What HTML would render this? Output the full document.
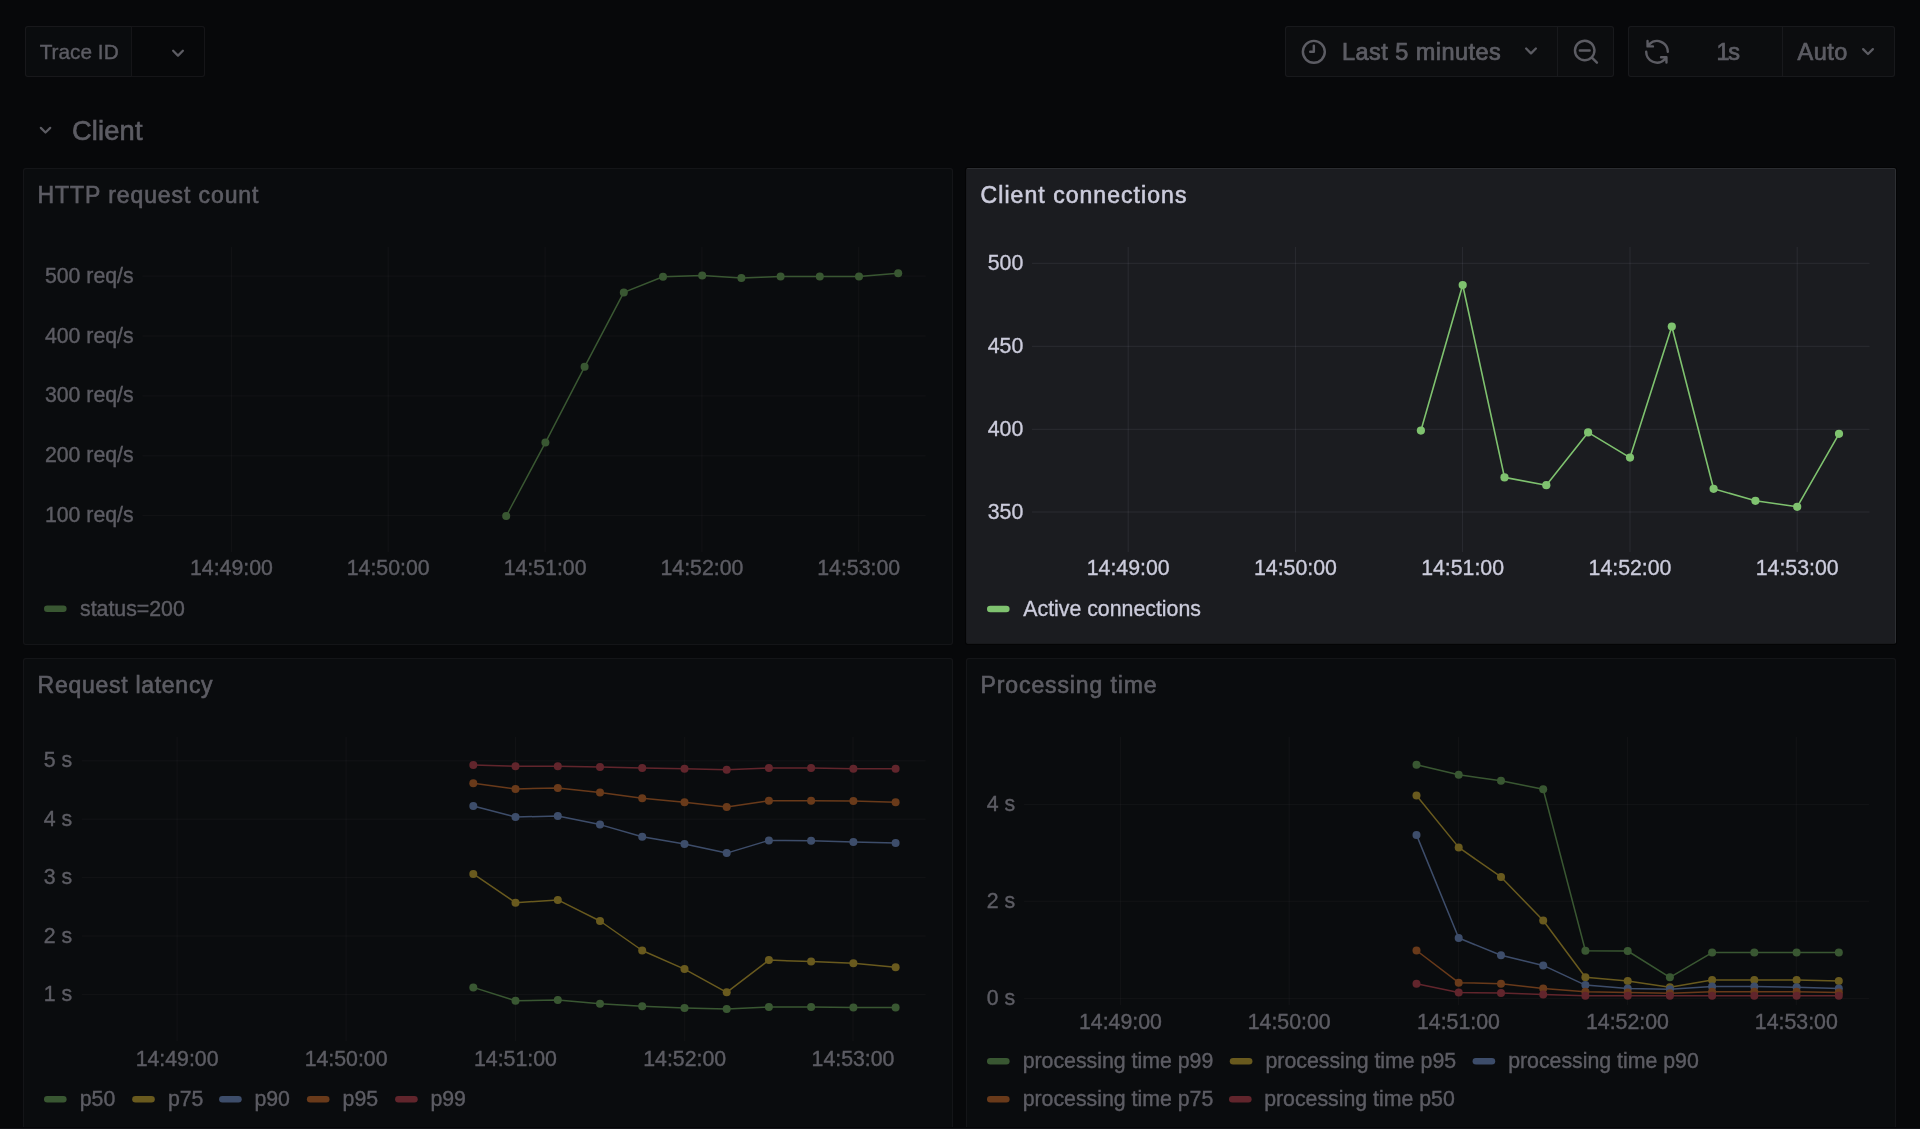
<!DOCTYPE html>
<html><head><meta charset="utf-8"><style>
html,body{margin:0;padding:0}
body{width:1920px;height:1129px;overflow:hidden;position:relative;background:#111217;font-family:"Liberation Sans", sans-serif}
.panel{position:absolute;box-sizing:border-box;background:#181b1f;border:1px solid rgba(204,204,220,0.12);border-radius:3px}
.box{position:absolute;box-sizing:border-box;border:1px solid rgba(204,204,220,0.16)}
svg.ps{position:absolute;overflow:visible;font-family:"Liberation Sans", sans-serif}
.ttl{stroke:#ccccdc;stroke-width:0.6px}
.med{stroke:#ccccdc;stroke-width:0.7px}
.lbl{stroke:#ccccdc;stroke-width:0.35px}
svg.ps{will-change:transform}
#dim{position:absolute;left:0;top:0;width:1920px;height:1129px;background:rgba(0,0,0,0.55)}
#focus{position:absolute;left:0;top:0;width:1920px;height:1129px}
</style></head><body>

<div class="box" style="left:25px;top:26px;width:107px;height:51px;background:#181b1f;border-radius:3px 0 0 3px"></div>
<div class="box" style="left:131px;top:26px;width:74px;height:51px;background:#111217;border-radius:0 3px 3px 0"></div>
<div class="box" style="left:1285px;top:26px;width:273px;height:51px;background:#1b1d22;border-radius:3px 0 0 3px"></div>
<div class="box" style="left:1557px;top:26px;width:57px;height:51px;background:#1b1d22;border-radius:0 3px 3px 0"></div>
<div class="box" style="left:1628px;top:26px;width:155px;height:51px;background:#1b1d22;border-radius:3px 0 0 3px"></div>
<div class="box" style="left:1782px;top:26px;width:113px;height:51px;background:#1b1d22;border-radius:0 3px 3px 0"></div>
<svg class="ps" style="left:0;top:0" width="1920" height="160" viewBox="0 0 1920 160">
  <text x="39.7" y="58.8" font-size="20.8" text-anchor="start" fill="#ccccdc" class="lbl">Trace ID</text>
  <path transform="translate(164.3,39.5) scale(1.14)" fill="#ccccdc" d="M17,9.17a1,1,0,0,0-1.41,0L12,12.71,8.46,9.17a1,1,0,0,0-1.41,0,1,1,0,0,0,0,1.42l4.24,4.24a1,1,0,0,0,1.42,0L17,10.59A1,1,0,0,0,17,9.17Z"/>
  <path transform="translate(1299.2,37.2) scale(1.22)" fill="#ccccdc" d="M12,2A10,10,0,1,0,22,12,10.01114,10.01114,0,0,0,12,2Zm0,18a8,8,0,1,1,8-8A8.00917,8.00917,0,0,1,12,20ZM12,6a.99974.99974,0,0,0-1,1v4H9a1,1,0,0,0,0,2h3a.99974.99974,0,0,0,1-1V7A.99974.99974,0,0,0,12,6Z"/>
  <text x="1342" y="59.8" font-size="23.5" text-anchor="start" fill="#ccccdc" class="med" letter-spacing="0.45">Last 5 minutes</text>
  <path transform="translate(1517.3,37.3) scale(1.14)" fill="#ccccdc" d="M17,9.17a1,1,0,0,0-1.41,0L12,12.71,8.46,9.17a1,1,0,0,0-1.41,0,1,1,0,0,0,0,1.42l4.24,4.24a1,1,0,0,0,1.42,0L17,10.59A1,1,0,0,0,17,9.17Z"/>
  <path transform="translate(1571.3,37.1) scale(1.22)" fill="#ccccdc" d="M21.71,20.29,18,16.61A9,9,0,1,0,16.61,18l3.68,3.68a1,1,0,0,0,1.42,0A1,1,0,0,0,21.71,20.29ZM11,18a7,7,0,1,1,7-7A7,7,0,0,1,11,18Zm4-8H7a1,1,0,0,0,0,2h8a1,1,0,0,0,0-2Z"/>
  <path transform="translate(1642.6,37.4) scale(1.2)" fill="#ccccdc" d="M19.91,15.51H15.38a1,1,0,0,0,0,2h2.4A8,8,0,0,1,4,12a1,1,0,0,0-2,0,10,10,0,0,0,16.88,7.23V21a1,1,0,0,0,2,0V16.5A1,1,0,0,0,19.91,15.51ZM12,2A10,10,0,0,0,5.12,4.77V3a1,1,0,0,0-2,0V7.5a1,1,0,0,0,1,1h4.5a1,1,0,0,0,0-2H6.22A8,8,0,0,1,20,12a1,1,0,0,0,2,0A10,10,0,0,0,12,2Z"/>
  <text x="1716.5" y="60" font-size="23.5" text-anchor="start" fill="#ccccdc" class="med" letter-spacing="-1.2">1s</text>
  <text x="1797.5" y="60" font-size="23.5" text-anchor="start" fill="#ccccdc" class="med" letter-spacing="0.5">Auto</text>
  <path transform="translate(1854.3,37.9) scale(1.14)" fill="#ccccdc" d="M17,9.17a1,1,0,0,0-1.41,0L12,12.71,8.46,9.17a1,1,0,0,0-1.41,0,1,1,0,0,0,0,1.42l4.24,4.24a1,1,0,0,0,1.42,0L17,10.59A1,1,0,0,0,17,9.17Z"/>
  <path transform="translate(32.3,117) scale(1.1)" fill="#ccccdc" d="M17,9.17a1,1,0,0,0-1.41,0L12,12.71,8.46,9.17a1,1,0,0,0-1.41,0,1,1,0,0,0,0,1.42l4.24,4.24a1,1,0,0,0,1.42,0L17,10.59A1,1,0,0,0,17,9.17Z"/>
  <text x="72" y="140.3" font-size="27.3" text-anchor="start" fill="#ccccdc" class="ttl" letter-spacing="0.15">Client</text>
</svg>

<div class="panel" style="left:23px;top:168px;width:930px;height:477px;"></div><svg class="ps" style="left:23px;top:168px" width="930" height="477" viewBox="23 168 930 477"><text x="37.6" y="203.3" font-size="23" text-anchor="start" fill="#ccccdc" class="ttl" letter-spacing="0.91">HTTP request count</text><line x1="142.5" y1="276.1" x2="925.6" y2="276.1" stroke="rgba(204,204,220,0.09)" stroke-width="1"/><line x1="142.5" y1="336.0" x2="925.6" y2="336.0" stroke="rgba(204,204,220,0.09)" stroke-width="1"/><line x1="142.5" y1="395.9" x2="925.6" y2="395.9" stroke="rgba(204,204,220,0.09)" stroke-width="1"/><line x1="142.5" y1="455.8" x2="925.6" y2="455.8" stroke="rgba(204,204,220,0.09)" stroke-width="1"/><line x1="142.5" y1="515.6" x2="925.6" y2="515.6" stroke="rgba(204,204,220,0.09)" stroke-width="1"/><line x1="231.4" y1="247" x2="231.4" y2="552" stroke="rgba(204,204,220,0.09)" stroke-width="1"/><line x1="388.2" y1="247" x2="388.2" y2="552" stroke="rgba(204,204,220,0.09)" stroke-width="1"/><line x1="545.1" y1="247" x2="545.1" y2="552" stroke="rgba(204,204,220,0.09)" stroke-width="1"/><line x1="701.9" y1="247" x2="701.9" y2="552" stroke="rgba(204,204,220,0.09)" stroke-width="1"/><line x1="858.7" y1="247" x2="858.7" y2="552" stroke="rgba(204,204,220,0.09)" stroke-width="1"/><text x="133.7" y="282.6" font-size="21.3" text-anchor="end" fill="#ccccdc" class="lbl">500 req/s</text><text x="133.7" y="342.5" font-size="21.3" text-anchor="end" fill="#ccccdc" class="lbl">400 req/s</text><text x="133.7" y="402.4" font-size="21.3" text-anchor="end" fill="#ccccdc" class="lbl">300 req/s</text><text x="133.7" y="462.3" font-size="21.3" text-anchor="end" fill="#ccccdc" class="lbl">200 req/s</text><text x="133.7" y="522.1" font-size="21.3" text-anchor="end" fill="#ccccdc" class="lbl">100 req/s</text><text x="231.4" y="575.3" font-size="21.3" text-anchor="middle" fill="#ccccdc" class="lbl">14:49:00</text><text x="388.2" y="575.3" font-size="21.3" text-anchor="middle" fill="#ccccdc" class="lbl">14:50:00</text><text x="545.1" y="575.3" font-size="21.3" text-anchor="middle" fill="#ccccdc" class="lbl">14:51:00</text><text x="701.9" y="575.3" font-size="21.3" text-anchor="middle" fill="#ccccdc" class="lbl">14:52:00</text><text x="858.7" y="575.3" font-size="21.3" text-anchor="middle" fill="#ccccdc" class="lbl">14:53:00</text><polyline points="506.2,516.0 545.4,442.6 584.6,366.8 623.8,292.4 663.0,276.8 702.2,275.4 741.4,277.9 780.6,276.5 819.8,276.5 859.0,276.5 898.2,273.3" fill="none" stroke="#7fc26f" stroke-width="1.5" stroke-linejoin="round"/><circle cx="506.2" cy="516.0" r="4" fill="#7fc26f"/><circle cx="545.4" cy="442.6" r="4" fill="#7fc26f"/><circle cx="584.6" cy="366.8" r="4" fill="#7fc26f"/><circle cx="623.8" cy="292.4" r="4" fill="#7fc26f"/><circle cx="663.0" cy="276.8" r="4" fill="#7fc26f"/><circle cx="702.2" cy="275.4" r="4" fill="#7fc26f"/><circle cx="741.4" cy="277.9" r="4" fill="#7fc26f"/><circle cx="780.6" cy="276.5" r="4" fill="#7fc26f"/><circle cx="819.8" cy="276.5" r="4" fill="#7fc26f"/><circle cx="859.0" cy="276.5" r="4" fill="#7fc26f"/><circle cx="898.2" cy="273.3" r="4" fill="#7fc26f"/><rect x="44" y="605.5" width="22.6" height="6.6" rx="3.3" fill="#7fc26f"/><text x="80" y="615.8" font-size="21.3" text-anchor="start" fill="#ccccdc" class="lbl">status=200</text></svg>
<div class="panel" style="left:23px;top:658px;width:930px;height:477px;"></div><svg class="ps" style="left:23px;top:658px" width="930" height="477" viewBox="23 658 930 477"><text x="37.6" y="693.3" font-size="23" text-anchor="start" fill="#ccccdc" class="ttl" letter-spacing="0.72">Request latency</text><line x1="81.8" y1="760.8" x2="925.6" y2="760.8" stroke="rgba(204,204,220,0.09)" stroke-width="1"/><line x1="81.8" y1="819.2" x2="925.6" y2="819.2" stroke="rgba(204,204,220,0.09)" stroke-width="1"/><line x1="81.8" y1="877.6" x2="925.6" y2="877.6" stroke="rgba(204,204,220,0.09)" stroke-width="1"/><line x1="81.8" y1="936.0" x2="925.6" y2="936.0" stroke="rgba(204,204,220,0.09)" stroke-width="1"/><line x1="81.8" y1="994.4" x2="925.6" y2="994.4" stroke="rgba(204,204,220,0.09)" stroke-width="1"/><line x1="177.1" y1="737" x2="177.1" y2="1041" stroke="rgba(204,204,220,0.09)" stroke-width="1"/><line x1="346.1" y1="737" x2="346.1" y2="1041" stroke="rgba(204,204,220,0.09)" stroke-width="1"/><line x1="515.4" y1="737" x2="515.4" y2="1041" stroke="rgba(204,204,220,0.09)" stroke-width="1"/><line x1="684.7" y1="737" x2="684.7" y2="1041" stroke="rgba(204,204,220,0.09)" stroke-width="1"/><line x1="853.0" y1="737" x2="853.0" y2="1041" stroke="rgba(204,204,220,0.09)" stroke-width="1"/><text x="72.1" y="767.3" font-size="21.3" text-anchor="end" fill="#ccccdc" class="lbl">5 s</text><text x="72.1" y="825.7" font-size="21.3" text-anchor="end" fill="#ccccdc" class="lbl">4 s</text><text x="72.1" y="884.1" font-size="21.3" text-anchor="end" fill="#ccccdc" class="lbl">3 s</text><text x="72.1" y="942.5" font-size="21.3" text-anchor="end" fill="#ccccdc" class="lbl">2 s</text><text x="72.1" y="1000.9" font-size="21.3" text-anchor="end" fill="#ccccdc" class="lbl">1 s</text><text x="177.1" y="1065.6" font-size="21.3" text-anchor="middle" fill="#ccccdc" class="lbl">14:49:00</text><text x="346.1" y="1065.6" font-size="21.3" text-anchor="middle" fill="#ccccdc" class="lbl">14:50:00</text><text x="515.4" y="1065.6" font-size="21.3" text-anchor="middle" fill="#ccccdc" class="lbl">14:51:00</text><text x="684.7" y="1065.6" font-size="21.3" text-anchor="middle" fill="#ccccdc" class="lbl">14:52:00</text><text x="853.0" y="1065.6" font-size="21.3" text-anchor="middle" fill="#ccccdc" class="lbl">14:53:00</text><polyline points="473.3,987.4 515.5,1000.7 557.8,1000.1 600.0,1003.8 642.2,1006.3 684.5,1008.1 726.7,1009.1 768.9,1006.9 811.1,1006.9 853.4,1007.5 895.6,1007.5" fill="none" stroke="#7fc26f" stroke-width="1.5" stroke-linejoin="round"/><circle cx="473.3" cy="987.4" r="4" fill="#7fc26f"/><circle cx="515.5" cy="1000.7" r="4" fill="#7fc26f"/><circle cx="557.8" cy="1000.1" r="4" fill="#7fc26f"/><circle cx="600.0" cy="1003.8" r="4" fill="#7fc26f"/><circle cx="642.2" cy="1006.3" r="4" fill="#7fc26f"/><circle cx="684.5" cy="1008.1" r="4" fill="#7fc26f"/><circle cx="726.7" cy="1009.1" r="4" fill="#7fc26f"/><circle cx="768.9" cy="1006.9" r="4" fill="#7fc26f"/><circle cx="811.1" cy="1006.9" r="4" fill="#7fc26f"/><circle cx="853.4" cy="1007.5" r="4" fill="#7fc26f"/><circle cx="895.6" cy="1007.5" r="4" fill="#7fc26f"/><polyline points="473.3,873.9 515.5,902.7 557.8,899.9 600.0,921.0 642.2,950.5 684.5,969.1 726.7,992.3 768.9,960.1 811.1,961.6 853.4,963.2 895.6,967.2" fill="none" stroke="#e8c843" stroke-width="1.5" stroke-linejoin="round"/><circle cx="473.3" cy="873.9" r="4" fill="#e8c843"/><circle cx="515.5" cy="902.7" r="4" fill="#e8c843"/><circle cx="557.8" cy="899.9" r="4" fill="#e8c843"/><circle cx="600.0" cy="921.0" r="4" fill="#e8c843"/><circle cx="642.2" cy="950.5" r="4" fill="#e8c843"/><circle cx="684.5" cy="969.1" r="4" fill="#e8c843"/><circle cx="726.7" cy="992.3" r="4" fill="#e8c843"/><circle cx="768.9" cy="960.1" r="4" fill="#e8c843"/><circle cx="811.1" cy="961.6" r="4" fill="#e8c843"/><circle cx="853.4" cy="963.2" r="4" fill="#e8c843"/><circle cx="895.6" cy="967.2" r="4" fill="#e8c843"/><polyline points="473.3,806.0 515.5,817.1 557.8,815.9 600.0,824.6 642.2,836.7 684.5,844.1 726.7,853.1 768.9,840.4 811.1,840.7 853.4,842.0 895.6,842.9" fill="none" stroke="#88abec" stroke-width="1.5" stroke-linejoin="round"/><circle cx="473.3" cy="806.0" r="4" fill="#88abec"/><circle cx="515.5" cy="817.1" r="4" fill="#88abec"/><circle cx="557.8" cy="815.9" r="4" fill="#88abec"/><circle cx="600.0" cy="824.6" r="4" fill="#88abec"/><circle cx="642.2" cy="836.7" r="4" fill="#88abec"/><circle cx="684.5" cy="844.1" r="4" fill="#88abec"/><circle cx="726.7" cy="853.1" r="4" fill="#88abec"/><circle cx="768.9" cy="840.4" r="4" fill="#88abec"/><circle cx="811.1" cy="840.7" r="4" fill="#88abec"/><circle cx="853.4" cy="842.0" r="4" fill="#88abec"/><circle cx="895.6" cy="842.9" r="4" fill="#88abec"/><polyline points="473.3,783.3 515.5,788.9 557.8,788.0 600.0,792.6 642.2,798.2 684.5,802.2 726.7,806.9 768.9,800.7 811.1,800.7 853.4,801.0 895.6,802.2" fill="none" stroke="#e8803a" stroke-width="1.5" stroke-linejoin="round"/><circle cx="473.3" cy="783.3" r="4" fill="#e8803a"/><circle cx="515.5" cy="788.9" r="4" fill="#e8803a"/><circle cx="557.8" cy="788.0" r="4" fill="#e8803a"/><circle cx="600.0" cy="792.6" r="4" fill="#e8803a"/><circle cx="642.2" cy="798.2" r="4" fill="#e8803a"/><circle cx="684.5" cy="802.2" r="4" fill="#e8803a"/><circle cx="726.7" cy="806.9" r="4" fill="#e8803a"/><circle cx="768.9" cy="800.7" r="4" fill="#e8803a"/><circle cx="811.1" cy="800.7" r="4" fill="#e8803a"/><circle cx="853.4" cy="801.0" r="4" fill="#e8803a"/><circle cx="895.6" cy="802.2" r="4" fill="#e8803a"/><polyline points="473.3,765.0 515.5,766.3 557.8,766.3 600.0,766.9 642.2,768.1 684.5,768.8 726.7,769.7 768.9,768.1 811.1,768.1 853.4,768.8 895.6,768.8" fill="none" stroke="#d85262" stroke-width="1.5" stroke-linejoin="round"/><circle cx="473.3" cy="765.0" r="4" fill="#d85262"/><circle cx="515.5" cy="766.3" r="4" fill="#d85262"/><circle cx="557.8" cy="766.3" r="4" fill="#d85262"/><circle cx="600.0" cy="766.9" r="4" fill="#d85262"/><circle cx="642.2" cy="768.1" r="4" fill="#d85262"/><circle cx="684.5" cy="768.8" r="4" fill="#d85262"/><circle cx="726.7" cy="769.7" r="4" fill="#d85262"/><circle cx="768.9" cy="768.1" r="4" fill="#d85262"/><circle cx="811.1" cy="768.1" r="4" fill="#d85262"/><circle cx="853.4" cy="768.8" r="4" fill="#d85262"/><circle cx="895.6" cy="768.8" r="4" fill="#d85262"/><rect x="44" y="1095.9" width="22.6" height="6.6" rx="3.3" fill="#7fc26f"/><text x="79.7" y="1106.2" font-size="21.3" text-anchor="start" fill="#ccccdc" class="lbl">p50</text><rect x="132.2" y="1095.9" width="22.6" height="6.6" rx="3.3" fill="#e8c843"/><text x="167.9" y="1106.2" font-size="21.3" text-anchor="start" fill="#ccccdc" class="lbl">p75</text><rect x="219.1" y="1095.9" width="22.6" height="6.6" rx="3.3" fill="#88abec"/><text x="254.4" y="1106.2" font-size="21.3" text-anchor="start" fill="#ccccdc" class="lbl">p90</text><rect x="306.9" y="1095.9" width="22.6" height="6.6" rx="3.3" fill="#e8803a"/><text x="342.6" y="1106.2" font-size="21.3" text-anchor="start" fill="#ccccdc" class="lbl">p95</text><rect x="395.1" y="1095.9" width="22.6" height="6.6" rx="3.3" fill="#d85262"/><text x="430.4" y="1106.2" font-size="21.3" text-anchor="start" fill="#ccccdc" class="lbl">p99</text></svg>
<div class="panel" style="left:966px;top:658px;width:930px;height:477px;"></div><svg class="ps" style="left:966px;top:658px" width="930" height="477" viewBox="966 658 930 477"><text x="980.6" y="693.3" font-size="23" text-anchor="start" fill="#ccccdc" class="ttl" letter-spacing="0.88">Processing time</text><line x1="1024.1" y1="804.5" x2="1869" y2="804.5" stroke="rgba(204,204,220,0.09)" stroke-width="1"/><line x1="1024.1" y1="901.3" x2="1869" y2="901.3" stroke="rgba(204,204,220,0.09)" stroke-width="1"/><line x1="1024.1" y1="998.4" x2="1869" y2="998.4" stroke="rgba(204,204,220,0.09)" stroke-width="1"/><line x1="1120.4" y1="737" x2="1120.4" y2="1005" stroke="rgba(204,204,220,0.09)" stroke-width="1"/><line x1="1289.2" y1="737" x2="1289.2" y2="1005" stroke="rgba(204,204,220,0.09)" stroke-width="1"/><line x1="1458.4" y1="737" x2="1458.4" y2="1005" stroke="rgba(204,204,220,0.09)" stroke-width="1"/><line x1="1627.4" y1="737" x2="1627.4" y2="1005" stroke="rgba(204,204,220,0.09)" stroke-width="1"/><line x1="1796.3" y1="737" x2="1796.3" y2="1005" stroke="rgba(204,204,220,0.09)" stroke-width="1"/><text x="1015.1" y="811.0" font-size="21.3" text-anchor="end" fill="#ccccdc" class="lbl">4 s</text><text x="1015.1" y="907.8" font-size="21.3" text-anchor="end" fill="#ccccdc" class="lbl">2 s</text><text x="1015.1" y="1004.9" font-size="21.3" text-anchor="end" fill="#ccccdc" class="lbl">0 s</text><text x="1120.4" y="1028.6" font-size="21.3" text-anchor="middle" fill="#ccccdc" class="lbl">14:49:00</text><text x="1289.2" y="1028.6" font-size="21.3" text-anchor="middle" fill="#ccccdc" class="lbl">14:50:00</text><text x="1458.4" y="1028.6" font-size="21.3" text-anchor="middle" fill="#ccccdc" class="lbl">14:51:00</text><text x="1627.4" y="1028.6" font-size="21.3" text-anchor="middle" fill="#ccccdc" class="lbl">14:52:00</text><text x="1796.3" y="1028.6" font-size="21.3" text-anchor="middle" fill="#ccccdc" class="lbl">14:53:00</text><polyline points="1416.5,764.7 1458.7,774.8 1501.0,780.7 1543.2,789.2 1585.4,950.8 1627.7,951.0 1669.9,977.3 1712.1,952.6 1754.3,952.6 1796.6,952.6 1838.8,952.6" fill="none" stroke="#7fc26f" stroke-width="1.5" stroke-linejoin="round"/><circle cx="1416.5" cy="764.7" r="4" fill="#7fc26f"/><circle cx="1458.7" cy="774.8" r="4" fill="#7fc26f"/><circle cx="1501.0" cy="780.7" r="4" fill="#7fc26f"/><circle cx="1543.2" cy="789.2" r="4" fill="#7fc26f"/><circle cx="1585.4" cy="950.8" r="4" fill="#7fc26f"/><circle cx="1627.7" cy="951.0" r="4" fill="#7fc26f"/><circle cx="1669.9" cy="977.3" r="4" fill="#7fc26f"/><circle cx="1712.1" cy="952.6" r="4" fill="#7fc26f"/><circle cx="1754.3" cy="952.6" r="4" fill="#7fc26f"/><circle cx="1796.6" cy="952.6" r="4" fill="#7fc26f"/><circle cx="1838.8" cy="952.6" r="4" fill="#7fc26f"/><polyline points="1416.5,795.5 1458.7,847.4 1501.0,876.9 1543.2,920.5 1585.4,977.3 1627.7,981.1 1669.9,987.2 1712.1,980.0 1754.3,980.0 1796.6,980.0 1838.8,981.1" fill="none" stroke="#e8c843" stroke-width="1.5" stroke-linejoin="round"/><circle cx="1416.5" cy="795.5" r="4" fill="#e8c843"/><circle cx="1458.7" cy="847.4" r="4" fill="#e8c843"/><circle cx="1501.0" cy="876.9" r="4" fill="#e8c843"/><circle cx="1543.2" cy="920.5" r="4" fill="#e8c843"/><circle cx="1585.4" cy="977.3" r="4" fill="#e8c843"/><circle cx="1627.7" cy="981.1" r="4" fill="#e8c843"/><circle cx="1669.9" cy="987.2" r="4" fill="#e8c843"/><circle cx="1712.1" cy="980.0" r="4" fill="#e8c843"/><circle cx="1754.3" cy="980.0" r="4" fill="#e8c843"/><circle cx="1796.6" cy="980.0" r="4" fill="#e8c843"/><circle cx="1838.8" cy="981.1" r="4" fill="#e8c843"/><polyline points="1416.5,834.9 1458.7,938.0 1501.0,955.3 1543.2,965.4 1585.4,985.1 1627.7,988.5 1669.9,989.3 1712.1,986.6 1754.3,986.6 1796.6,987.2 1838.8,988.5" fill="none" stroke="#88abec" stroke-width="1.5" stroke-linejoin="round"/><circle cx="1416.5" cy="834.9" r="4" fill="#88abec"/><circle cx="1458.7" cy="938.0" r="4" fill="#88abec"/><circle cx="1501.0" cy="955.3" r="4" fill="#88abec"/><circle cx="1543.2" cy="965.4" r="4" fill="#88abec"/><circle cx="1585.4" cy="985.1" r="4" fill="#88abec"/><circle cx="1627.7" cy="988.5" r="4" fill="#88abec"/><circle cx="1669.9" cy="989.3" r="4" fill="#88abec"/><circle cx="1712.1" cy="986.6" r="4" fill="#88abec"/><circle cx="1754.3" cy="986.6" r="4" fill="#88abec"/><circle cx="1796.6" cy="987.2" r="4" fill="#88abec"/><circle cx="1838.8" cy="988.5" r="4" fill="#88abec"/><polyline points="1416.5,950.5 1458.7,982.7 1501.0,983.7 1543.2,988.5 1585.4,991.7 1627.7,992.5 1669.9,993.3 1712.1,991.7 1754.3,991.7 1796.6,991.7 1838.8,992.5" fill="none" stroke="#e8803a" stroke-width="1.5" stroke-linejoin="round"/><circle cx="1416.5" cy="950.5" r="4" fill="#e8803a"/><circle cx="1458.7" cy="982.7" r="4" fill="#e8803a"/><circle cx="1501.0" cy="983.7" r="4" fill="#e8803a"/><circle cx="1543.2" cy="988.5" r="4" fill="#e8803a"/><circle cx="1585.4" cy="991.7" r="4" fill="#e8803a"/><circle cx="1627.7" cy="992.5" r="4" fill="#e8803a"/><circle cx="1669.9" cy="993.3" r="4" fill="#e8803a"/><circle cx="1712.1" cy="991.7" r="4" fill="#e8803a"/><circle cx="1754.3" cy="991.7" r="4" fill="#e8803a"/><circle cx="1796.6" cy="991.7" r="4" fill="#e8803a"/><circle cx="1838.8" cy="992.5" r="4" fill="#e8803a"/><polyline points="1416.5,983.7 1458.7,992.5 1501.0,993.0 1543.2,994.6 1585.4,995.7 1627.7,995.7 1669.9,995.7 1712.1,995.7 1754.3,995.7 1796.6,995.7 1838.8,995.7" fill="none" stroke="#d85262" stroke-width="1.5" stroke-linejoin="round"/><circle cx="1416.5" cy="983.7" r="4" fill="#d85262"/><circle cx="1458.7" cy="992.5" r="4" fill="#d85262"/><circle cx="1501.0" cy="993.0" r="4" fill="#d85262"/><circle cx="1543.2" cy="994.6" r="4" fill="#d85262"/><circle cx="1585.4" cy="995.7" r="4" fill="#d85262"/><circle cx="1627.7" cy="995.7" r="4" fill="#d85262"/><circle cx="1669.9" cy="995.7" r="4" fill="#d85262"/><circle cx="1712.1" cy="995.7" r="4" fill="#d85262"/><circle cx="1754.3" cy="995.7" r="4" fill="#d85262"/><circle cx="1796.6" cy="995.7" r="4" fill="#d85262"/><circle cx="1838.8" cy="995.7" r="4" fill="#d85262"/><rect x="987" y="1057.9" width="22.6" height="6.6" rx="3.3" fill="#7fc26f"/><text x="1022.7" y="1068.2" font-size="21.3" text-anchor="start" fill="#ccccdc" class="lbl">processing time p99</text><rect x="1229.8" y="1057.9" width="22.6" height="6.6" rx="3.3" fill="#e8c843"/><text x="1265.5" y="1068.2" font-size="21.3" text-anchor="start" fill="#ccccdc" class="lbl">processing time p95</text><rect x="1472.6" y="1057.9" width="22.6" height="6.6" rx="3.3" fill="#88abec"/><text x="1508.2" y="1068.2" font-size="21.3" text-anchor="start" fill="#ccccdc" class="lbl">processing time p90</text><rect x="987" y="1095.9" width="22.6" height="6.6" rx="3.3" fill="#e8803a"/><text x="1022.7" y="1106.2" font-size="21.3" text-anchor="start" fill="#ccccdc" class="lbl">processing time p75</text><rect x="1229" y="1095.9" width="22.6" height="6.6" rx="3.3" fill="#d85262"/><text x="1264.2" y="1106.2" font-size="21.3" text-anchor="start" fill="#ccccdc" class="lbl">processing time p50</text></svg>
<div id="dim"></div>
<div style="position:absolute;left:0;top:1127px;width:1920px;height:1px;background:#060608"></div><div style="position:absolute;left:0;top:1128px;width:1920px;height:1px;background:#131418"></div>
<div id="focus">
<div class="panel" style="left:966px;top:168px;width:930px;height:476px;background:#1b1c20;border-color:#2b2d31 #2d2f33 #17181b #18191d;border-radius:2px;box-shadow:0 0 0 1px #040405"></div><svg class="ps" style="left:966px;top:168px" width="930" height="476" viewBox="966 168 930 476"><text x="980.6" y="203.3" font-size="23" text-anchor="start" fill="#ccccdc" class="ttl" letter-spacing="1.05">Client connections</text><line x1="1032" y1="263.3" x2="1869.5" y2="263.3" stroke="rgba(204,204,220,0.09)" stroke-width="1"/><line x1="1032" y1="346.3" x2="1869.5" y2="346.3" stroke="rgba(204,204,220,0.09)" stroke-width="1"/><line x1="1032" y1="429.3" x2="1869.5" y2="429.3" stroke="rgba(204,204,220,0.09)" stroke-width="1"/><line x1="1032" y1="512.0" x2="1869.5" y2="512.0" stroke="rgba(204,204,220,0.09)" stroke-width="1"/><line x1="1128.2" y1="247" x2="1128.2" y2="552" stroke="rgba(204,204,220,0.09)" stroke-width="1"/><line x1="1295.4" y1="247" x2="1295.4" y2="552" stroke="rgba(204,204,220,0.09)" stroke-width="1"/><line x1="1462.6" y1="247" x2="1462.6" y2="552" stroke="rgba(204,204,220,0.09)" stroke-width="1"/><line x1="1630.0" y1="247" x2="1630.0" y2="552" stroke="rgba(204,204,220,0.09)" stroke-width="1"/><line x1="1797.2" y1="247" x2="1797.2" y2="552" stroke="rgba(204,204,220,0.09)" stroke-width="1"/><text x="1023.3" y="269.8" font-size="21.3" text-anchor="end" fill="#ccccdc" class="lbl">500</text><text x="1023.3" y="352.8" font-size="21.3" text-anchor="end" fill="#ccccdc" class="lbl">450</text><text x="1023.3" y="435.8" font-size="21.3" text-anchor="end" fill="#ccccdc" class="lbl">400</text><text x="1023.3" y="518.5" font-size="21.3" text-anchor="end" fill="#ccccdc" class="lbl">350</text><text x="1128.2" y="575.3" font-size="21.3" text-anchor="middle" fill="#ccccdc" class="lbl">14:49:00</text><text x="1295.4" y="575.3" font-size="21.3" text-anchor="middle" fill="#ccccdc" class="lbl">14:50:00</text><text x="1462.6" y="575.3" font-size="21.3" text-anchor="middle" fill="#ccccdc" class="lbl">14:51:00</text><text x="1630.0" y="575.3" font-size="21.3" text-anchor="middle" fill="#ccccdc" class="lbl">14:52:00</text><text x="1797.2" y="575.3" font-size="21.3" text-anchor="middle" fill="#ccccdc" class="lbl">14:53:00</text><polyline points="1420.9,430.6 1462.7,285.0 1504.5,477.4 1546.3,485.2 1588.1,432.4 1630.0,457.6 1671.8,326.5 1713.6,488.8 1755.4,500.8 1797.2,506.8 1839.0,433.8" fill="none" stroke="#7fc26f" stroke-width="1.6" stroke-linejoin="round"/><circle cx="1420.9" cy="430.6" r="4.1" fill="#7fc26f"/><circle cx="1462.7" cy="285.0" r="4.1" fill="#7fc26f"/><circle cx="1504.5" cy="477.4" r="4.1" fill="#7fc26f"/><circle cx="1546.3" cy="485.2" r="4.1" fill="#7fc26f"/><circle cx="1588.1" cy="432.4" r="4.1" fill="#7fc26f"/><circle cx="1630.0" cy="457.6" r="4.1" fill="#7fc26f"/><circle cx="1671.8" cy="326.5" r="4.1" fill="#7fc26f"/><circle cx="1713.6" cy="488.8" r="4.1" fill="#7fc26f"/><circle cx="1755.4" cy="500.8" r="4.1" fill="#7fc26f"/><circle cx="1797.2" cy="506.8" r="4.1" fill="#7fc26f"/><circle cx="1839.0" cy="433.8" r="4.1" fill="#7fc26f"/><rect x="987" y="605.7" width="22.6" height="6.6" rx="3.3" fill="#7fc26f"/><text x="1023.3" y="616.0" font-size="21.3" text-anchor="start" fill="#ccccdc" class="lbl">Active connections</text></svg>
</div>
</body></html>
